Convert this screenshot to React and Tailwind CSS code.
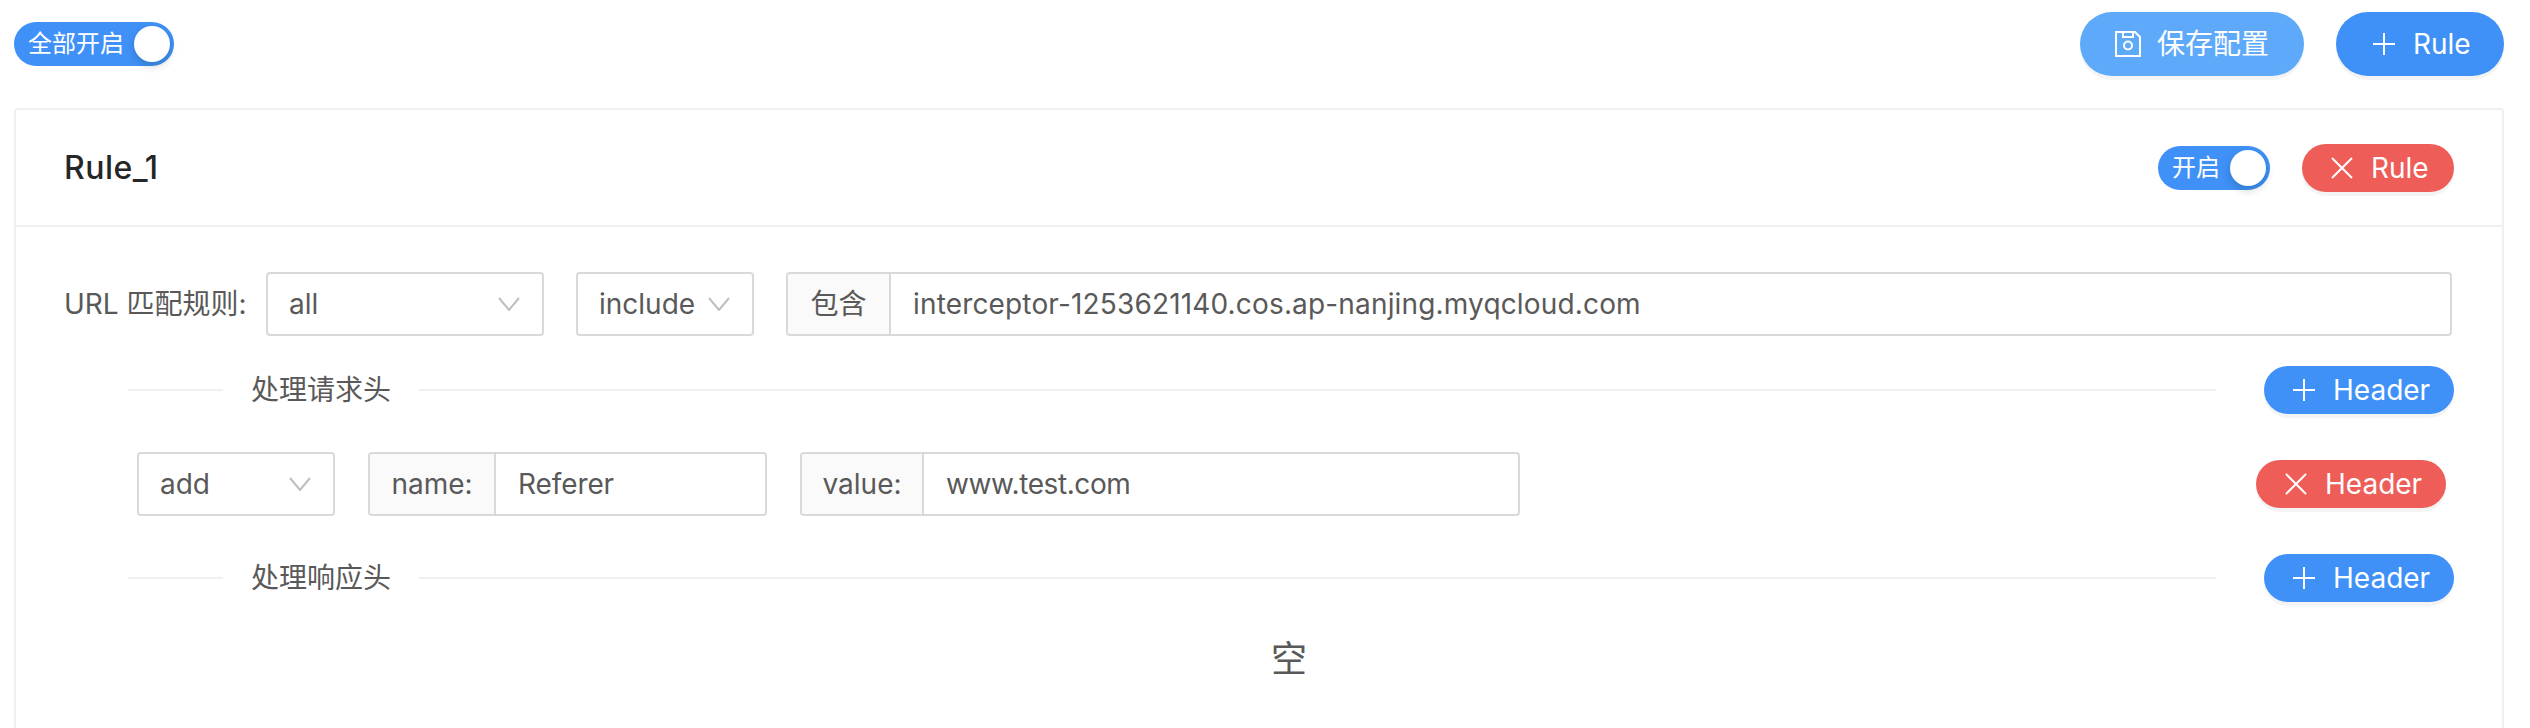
const FONT = "font-['Inter','Noto_Sans_CJK_SC',sans-serif]";

function Plus() {
  return (
    <svg width="22" height="22" viewBox="0 0 22 22" fill="none" stroke="currentColor" strokeWidth="2">
      <path d="M0 11H22M11 0V22" />
    </svg>
  );
}

function Cross() {
  return (
    <svg width="22" height="22" viewBox="0 0 22 22" fill="none" stroke="currentColor" strokeWidth="2">
      <path d="M1 1L21 21M21 1L1 21" />
    </svg>
  );
}

function Save() {
  return (
    <svg width="26" height="26" viewBox="0 0 26 26" fill="none" stroke="currentColor" strokeWidth="2">
      <path d="M1 1H20L25 6V25H1Z" />
      <path d="M8 1V6H18V1" />
      <circle cx="13" cy="14.5" r="4" />
    </svg>
  );
}

function Chevron() {
  return (
    <svg width="22" height="14" viewBox="0 0 22 14" fill="none" stroke="#bfbfbf" strokeWidth="2" className="shrink-0">
      <path d="M1 1L11 13L21 1" />
    </svg>
  );
}

function Toggle({ label, className }) {
  return (
    <div className={`flex h-[44px] items-center justify-between rounded-full bg-[#3f91f8] pl-[14px] pr-[4px] ${className}`}>
      <span className="text-[24px] leading-none text-white">{label}</span>
      <span className="h-[36px] w-[36px] rounded-full bg-white shadow-[0_4px_8px_rgba(0,35,11,0.2)]" />
    </div>
  );
}

function Btn({ icon, label, className }) {
  return (
    <button className={`flex h-[48px] w-[190px] shrink-0 items-center rounded-full pl-[29px] text-[28px] text-white shadow-[0_4px_0_rgba(0,0,0,0.045)] ${className}`}>
      {icon}
      <span className="ml-[18px]">{label}</span>
    </button>
  );
}

function Select({ value, className }) {
  return (
    <div className={`flex h-[64px] shrink-0 items-center justify-between rounded-[4px] border-2 border-[#d9d9d9] bg-white pl-[21px] pr-[22px] text-[28px] text-[#595959] ${className}`}>
      <span>{value}</span>
      <Chevron />
    </div>
  );
}

function Field({ addon, addonW, value, valueClass, className }) {
  return (
    <div className={`flex h-[64px] items-stretch rounded-[4px] border-2 border-[#d9d9d9] text-[28px] text-[#595959] ${className}`}>
      <div className={`flex items-center justify-center rounded-l-[2px] border-r-2 border-[#d9d9d9] bg-[#fafafa] ${addonW}`}>{addon}</div>
      <div className={`flex flex-1 items-center pl-[22px] ${valueClass}`}>{value}</div>
    </div>
  );
}

function Divider({ label }) {
  return (
    <div className="flex h-[48px] items-center pl-[112px] pr-[48px]">
      <div className="h-[2px] w-[95px] bg-[#f0f0f0]" />
      <span className="mx-[28px] text-[28px] text-[#595959]">{label}</span>
      <div className="h-[2px] flex-1 bg-[#f0f0f0]" />
      <Btn icon={<Plus />} label="Header" className="ml-[48px] bg-[#3f91f8]" />
    </div>
  );
}

export default function App() {
  return (
    <div className={`h-[728px] w-full overflow-hidden bg-white ${FONT}`}>
      <div className="mb-[32px] flex h-[76px] items-end justify-between pl-[14px] pr-[26px]">
        <Toggle label="全部开启" className="mb-[10px] w-[160px]" />
        <div className="flex gap-[32px]">
          <button className="flex h-[64px] w-[224px] items-center rounded-full bg-[#5ea9f9] pl-[35px] text-[28px] text-white shadow-[0_4px_0_rgba(0,0,0,0.045)]">
            <Save />
            <span className="ml-[16px]">保存配置</span>
          </button>
          <button className="flex h-[64px] w-[168px] items-center rounded-full bg-[#3f91f8] pl-[37px] text-[28px] text-white shadow-[0_4px_0_rgba(0,0,0,0.045)]">
            <Plus />
            <span className="ml-[18px]">Rule</span>
          </button>
        </div>
      </div>

      <div className="ml-[14px] mr-[26px] h-[800px] rounded-[4px] border-2 border-[#f0f0f0]">
        <div className="flex h-[117px] items-center justify-between border-b-2 border-[#f0f0f0] pl-[48px] pr-[48px]">
          <span className="text-[32px] font-medium tracking-[0.5px] text-[#262626]">Rule_1</span>
          <div className="flex items-center gap-[32px]">
            <Toggle label="开启" className="w-[112px]" />
            <button className="flex h-[48px] w-[152px] items-center rounded-full bg-[#ee5d58] pl-[29px] text-[28px] text-white shadow-[0_4px_0_rgba(0,0,0,0.045)]">
              <Cross />
              <span className="ml-[18px]">Rule</span>
            </button>
          </div>
        </div>

        <div className="pt-[45px]">
          <div className="flex items-center pl-[48px] pr-[50px]">
            <span className="w-[202px] shrink-0 whitespace-nowrap text-[28px] text-[#595959]">URL 匹配规则:</span>
            <Select value="all" className="w-[278px]" />
            <Select value="include" className="ml-[32px] w-[178px]" />
            <Field addon="包含" addonW="w-[103px]" value="interceptor-1253621140.cos.ap-nanjing.myqcloud.com" valueClass="tracking-[0.16px]" className="ml-[32px] flex-1" />
          </div>

          <div className="mt-[30px]">
            <Divider label="处理请求头" />
          </div>

          <div className="mt-[38px] flex items-center pl-[121px] pr-[56px]">
            <Select value="add" className="w-[198px]" />
            <Field addon="name:" addonW="w-[126px]" value="Referer" valueClass="tracking-[-0.1px]" className="ml-[33px] w-[399px]" />
            <Field addon="value:" addonW="w-[122px]" value="www.test.com" valueClass="tracking-[-0.4px]" className="ml-[33px] w-[720px]" />
            <div className="flex-1" />
            <Btn icon={<Cross />} label="Header" className="bg-[#ee5d58]" />
          </div>

          <div className="mt-[38px]">
            <Divider label="处理响应头" />
          </div>

          <div className="mt-[32px] pl-[60px] text-center text-[36px] leading-[50px] text-[#595959]">空</div>
        </div>
      </div>
    </div>
  );
}
